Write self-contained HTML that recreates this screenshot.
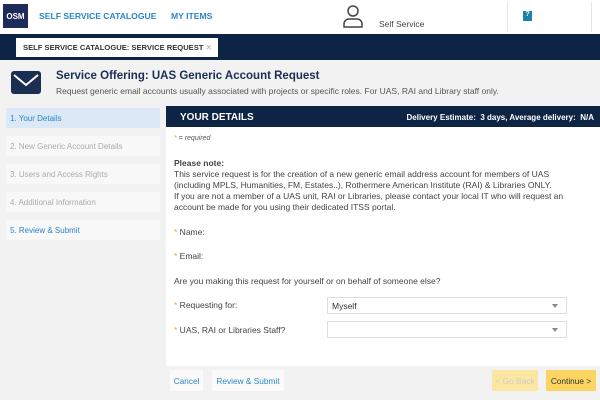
<!DOCTYPE html>
<html><head><style>
*{margin:0;padding:0;box-sizing:border-box}
body{width:600px;height:400px;overflow:hidden;background:#f2f2f2;font-family:"Liberation Sans",sans-serif;position:relative;color:#333}
.a{position:absolute;white-space:nowrap}
.nav{color:#2a86c8;font-weight:bold;font-size:8.6px}
.side{left:6px;width:154px;height:20px;background:#f8f8f8;font-size:8px;color:#aaa;padding:6px 4px}
.lbl{font-size:8.5px;color:#444}
.st{color:#f0a030}
.sel{background:#fff;border:1px solid #ddd;height:17px;font-size:8.5px;padding:3px 4px}
.sel:after{content:"";position:absolute;right:8px;top:6px;border:3px solid transparent;border-top:4px solid #888}
.btn{height:21px;font-size:8.3px;padding:6px 0;text-align:center}
</style></head><body>
<div class="a" style="left:0;top:0;width:600px;height:34px;background:#fff"></div>
<div class="a" style="left:3px;top:4px;width:25px;height:24px;background:#1d2a5a;color:#fff;font-size:8px;font-weight:bold;padding-top:8px;text-align:center">OSM</div>
<div class="a nav" style="left:39px;top:11px">SELF SERVICE CATALOGUE</div>
<div class="a nav" style="left:171px;top:11px">MY ITEMS</div>
<svg class="a" style="left:342px;top:4px" width="22" height="24" viewBox="0 0 22 24"><circle cx="11" cy="7" r="5" fill="none" stroke="#444" stroke-width="1.5"/><path d="M2 23v-3a5 5 0 0 1 5-5h8a5 5 0 0 1 5 5v3z" fill="none" stroke="#444" stroke-width="1.5"/></svg>
<div class="a" style="left:379px;top:19px;font-size:8.5px;color:#444">Self Service</div>
<div class="a" style="left:507px;top:2px;width:1px;height:30px;background:#e5e5e5"></div>
<div class="a" style="left:523px;top:11px;width:9px;height:10px;background:#1e7fa8;color:#fff;font-size:7px;font-weight:bold;text-align:center">?</div>
<div class="a" style="left:591px;top:2px;width:1px;height:30px;background:#e5e5e5"></div>
<div class="a" style="left:0;top:34px;width:600px;height:26px;background:#0e2444"></div>
<div class="a" style="left:16px;top:38px;width:202px;height:19px;background:#fff;font-size:7.6px;font-weight:bold;color:#333;padding:5px 7px">SELF SERVICE CATALOGUE: SERVICE REQUEST <span style="color:#bbb">✕</span></div>
<svg class="a" style="left:11px;top:71px" width="30" height="23" viewBox="0 0 30 23"><rect width="30" height="23" rx="3" fill="#1a2f52"/><path d="M3 4l12 10 12-10" fill="none" stroke="#fff" stroke-width="2"/></svg>
<div class="a" style="left:56px;top:70px;font-size:11.5px;font-weight:bold;color:#1a2f52">Service Offering: UAS Generic Account Request</div>
<div class="a" style="left:56px;top:86px;font-size:8.5px;color:#555">Request generic email accounts usually associated with projects or specific roles. For UAS, RAI and Library staff only.</div>
<div class="a side" style="top:108px;background:#dbe9f7;color:#2a86c8">1. Your Details</div>
<div class="a side" style="top:136px">2. New Generic Account Details</div>
<div class="a side" style="top:164px">3. Users and Access Rights</div>
<div class="a side" style="top:192px">4. Additional Information</div>
<div class="a side" style="top:220px;color:#2a86c8">5. Review &amp; Submit</div>
<div class="a" style="left:166px;top:106px;width:434px;height:260px;background:#fff"></div>
<div class="a" style="left:166px;top:106px;width:434px;height:21px;background:#0e2444;color:#fff;font-weight:bold"><span class="a" style="left:14px;top:6px;font-size:10px">YOUR DETAILS</span><span class="a" style="right:6px;top:7px;font-size:8px">Delivery Estimate:&nbsp; 3 days, Average delivery:&nbsp; N/A</span></div>
<div class="a" style="left:174px;top:135px;font-size:7px;font-style:italic;color:#555"><span class="st">*</span> = required</div>
<div class="a lbl" style="left:174px;top:158px;line-height:11px;font-size:8.5px"><b>Please note:</b><br>This service request is for the creation of a new generic email address account for members of UAS<br>(including MPLS, Humanities, FM, Estates..), Rothermere American Institute (RAI) &amp; Libraries ONLY.<br>If you are not a member of a UAS unit, RAI or Libraries, please contact your local IT who will request an<br>account be made for you using their dedicated ITSS portal.</div>
<div class="a lbl" style="left:174px;top:227px"><span class="st">*</span> Name:</div>
<div class="a lbl" style="left:174px;top:251px"><span class="st">*</span> Email:</div>
<div class="a lbl" style="left:174px;top:276px">Are you making this request for yourself or on behalf of someone else?</div>
<div class="a lbl" style="left:174px;top:300px"><span class="st">*</span> Requesting for:</div>
<div class="a lbl" style="left:174px;top:325px"><span class="st">*</span> UAS, RAI or Libraries Staff?</div>
<div class="a sel" style="left:327px;top:297px;width:240px">Myself</div>
<div class="a sel" style="left:327px;top:321px;width:240px"></div>
<div class="a btn" style="left:170px;top:370px;width:33px;background:#fafafa;color:#2a86c8">Cancel</div>
<div class="a btn" style="left:212px;top:370px;width:72px;background:#fafafa;color:#2a86c8">Review &amp; Submit</div>
<div class="a btn" style="left:492px;top:370px;width:46px;background:#fbe6a2;color:#ccc">&lt; Go Back</div>
<div class="a btn" style="left:546px;top:370px;width:50px;background:#fcd462;color:#333">Continue &gt;</div>
</body></html>
